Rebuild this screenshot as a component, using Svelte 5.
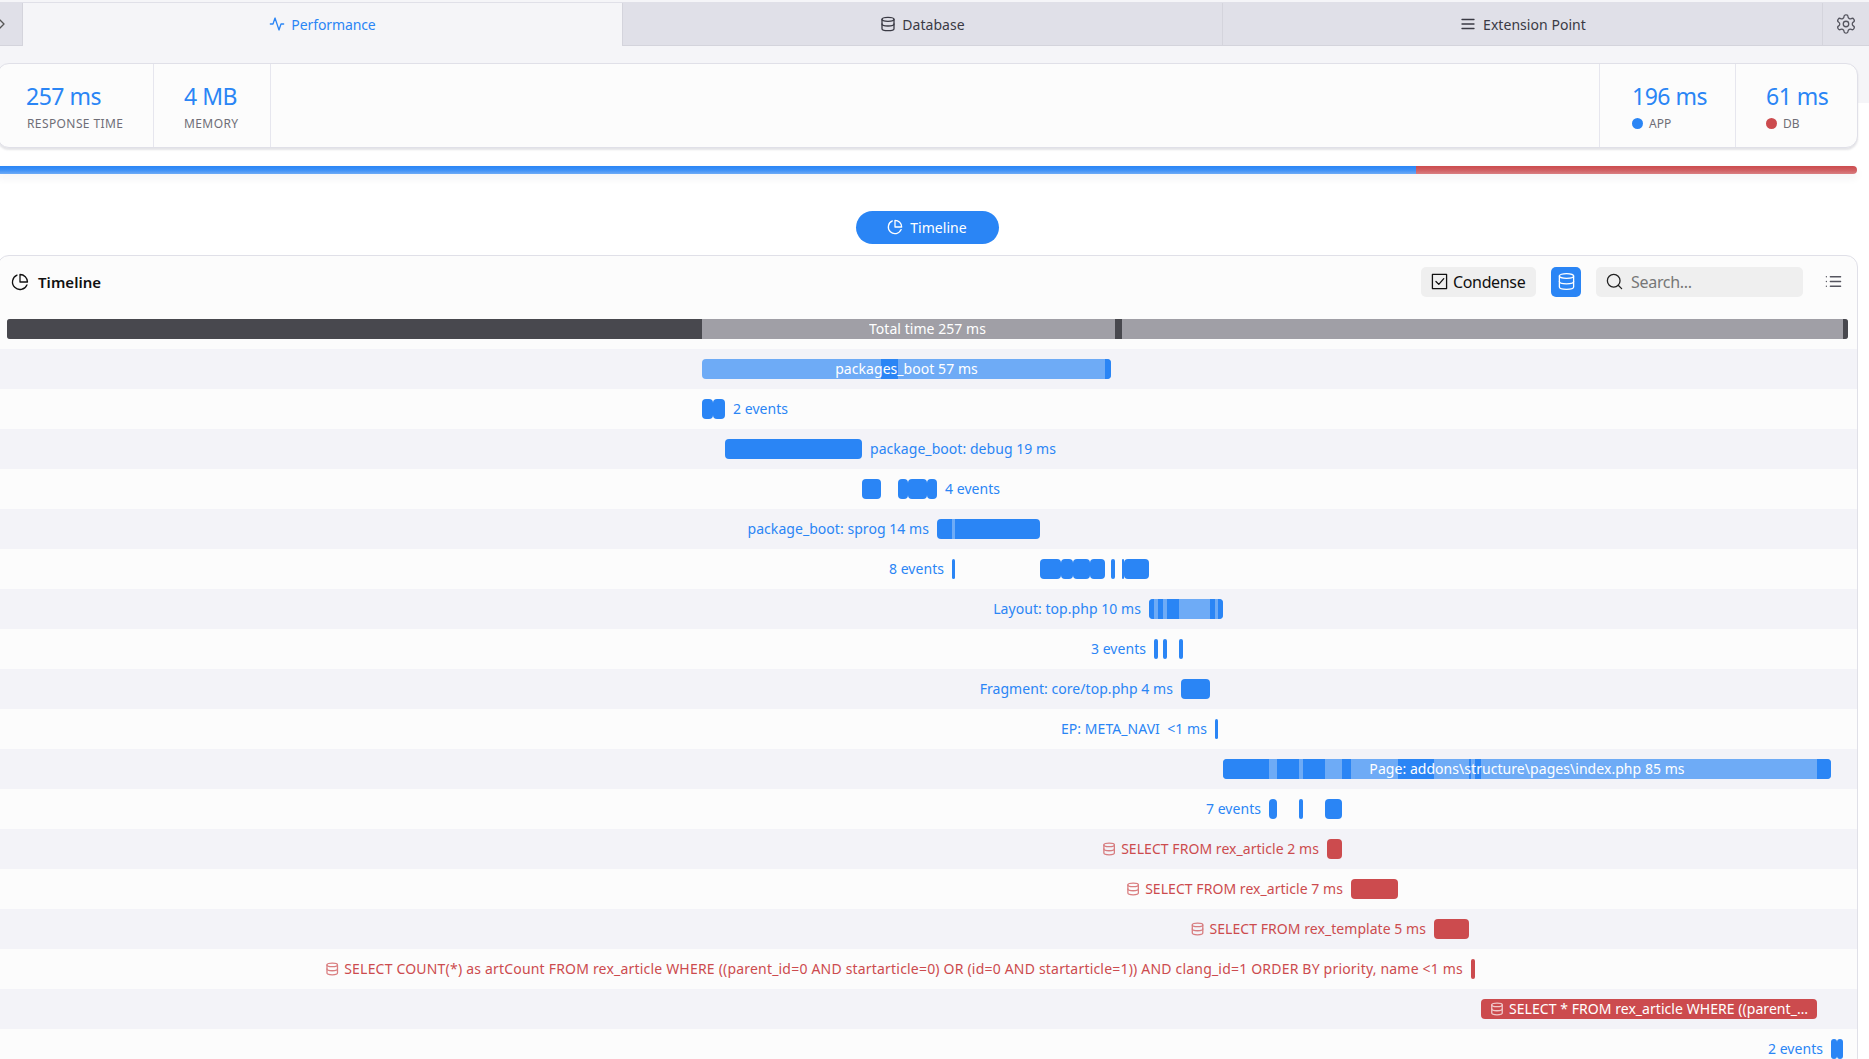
<script lang="ts">
	type Part = [number, number];
	type Bar = { from: number; to: number; tone: string; parts?: Part[]; text?: string; icon?: boolean };
	type Row = {
		bars: Bar[];
		label?: string;
		side?: 'left' | 'right';
		tone?: string;
		icon?: boolean;
	};

	const ev = (tone: string, ...spans: Part[]): Bar[] => spans.map(([from, to]) => ({ from, to, tone }));

	const rows: Row[] = [
		{
			bars: [{ from: 7, to: 1848, tone: 'grey', text: 'Total time 257 ms', parts: [[7, 702], [1115, 1122], [1843, 1848]] }]
		},
		{
			bars: [{ from: 702, to: 1111, tone: 'light', text: 'packages_boot 57 ms', parts: [[881, 898], [1105, 1111]] }]
		},
		{ bars: ev('blue', [702, 713], [713, 725]), label: '2 events', side: 'right' },
		{ bars: ev('blue', [725, 862]), label: 'package_boot: debug 19 ms', side: 'right' },
		{ bars: ev('blue', [862, 881], [898, 908], [908, 927], [927, 937]), label: '4 events', side: 'right' },
		{
			bars: [{ from: 937, to: 1040, tone: 'blue', parts: [] }, { from: 952, to: 955, tone: 'cut' }],
			label: 'package_boot: sprog 14 ms',
			side: 'left'
		},
		{
			bars: ev('blue', [952, 955], [1040, 1061], [1061, 1073], [1073, 1090], [1090, 1105], [1111, 1115], [1122, 1124], [1124, 1149]),
			label: '8 events',
			side: 'left'
		},
		{
			bars: [{ from: 1149, to: 1223, tone: 'light', parts: [[1149, 1154], [1158, 1163], [1167, 1179], [1210, 1215], [1218, 1223]] }],
			label: 'Layout: top.php 10 ms',
			side: 'left'
		},
		{ bars: ev('blue', [1154, 1158], [1163, 1167], [1179, 1183]), label: '3 events', side: 'left' },
		{ bars: ev('blue', [1181, 1210]), label: 'Fragment: core/top.php 4 ms', side: 'left' },
		{ bars: ev('blue', [1215, 1218]), label: 'EP: META_NAVI\u00a0 <1 ms', side: 'left' },
		{
			bars: [
				{
					from: 1223,
					to: 1831,
					tone: 'light',
					text: 'Page: addons\\structure\\pages\\index.php 85 ms',
					parts: [[1223, 1269], [1277, 1299], [1303, 1325], [1342, 1351], [1398, 1434], [1469, 1471], [1475, 1481], [1817, 1831]]
				}
			]
		},
		{ bars: ev('blue', [1269, 1277], [1299, 1303], [1325, 1342]), label: '7 events', side: 'left' },
		{ bars: ev('red', [1327, 1342]), label: 'SELECT FROM rex_article 2 ms', side: 'left', tone: 'red', icon: true },
		{ bars: ev('red', [1351, 1398]), label: 'SELECT FROM rex_article 7 ms', side: 'left', tone: 'red', icon: true },
		{ bars: ev('red', [1434, 1469]), label: 'SELECT FROM rex_template 5 ms', side: 'left', tone: 'red', icon: true },
		{
			bars: ev('red', [1471, 1475]),
			label: 'SELECT COUNT(*) as artCount FROM rex_article WHERE ((parent_id=0 AND startarticle=0) OR (id=0 AND startarticle=1)) AND clang_id=1 ORDER BY priority, name <1 ms',
			side: 'left',
			tone: 'red long',
			icon: true
		},
		{
			bars: [{ from: 1481, to: 1817, tone: 'red', text: 'SELECT * FROM rex_article WHERE ((parent_id=0 AND startarticle=0) OR (id=0 AND startarticle=1))', icon: true }]
		},
		{ bars: ev('blue', [1831, 1837], [1837, 1843]), label: '2 events', side: 'left' }
	];

	// card sits 2px left of the viewport once its border is counted
	const OFFSET = 2;
	const GAP = 8;

	function labelPos(row: Row) {
		const x = row.side === 'right' ? row.bars[row.bars.length - 1].to + GAP : row.bars[0].from - GAP;
		return `left:${x + OFFSET}px`;
	}
</script>

{#snippet icon(name: string, size = 16)}
	<svg class="icon" width={size} height={size} viewBox="0 0 24 24" fill="none" stroke="currentColor" stroke-width={31 / size} stroke-linecap="round" stroke-linejoin="round">
		{#if name === 'activity'}
			<path d="M22 12h-4l-3 9L9 3l-3 9H2" />
		{:else if name === 'database'}
			<ellipse cx="12" cy="5" rx="9" ry="3" />
			<path d="M3 5v14a9 3 0 0 0 18 0V5" />
			<path d="M3 12a9 3 0 0 0 18 0" />
		{:else if name === 'menu'}
			<path d="M4 6h16M4 12h16M4 18h16" />
		{:else if name === 'settings'}
			<path d="M12.22 2h-.44a2 2 0 0 0-2 2v.18a2 2 0 0 1-1 1.73l-.43.25a2 2 0 0 1-2 0l-.15-.08a2 2 0 0 0-2.73.73l-.22.38a2 2 0 0 0 .73 2.73l.15.1a2 2 0 0 1 1 1.72v.51a2 2 0 0 1-1 1.74l-.15.09a2 2 0 0 0-.73 2.73l.22.38a2 2 0 0 0 2.73.73l.15-.08a2 2 0 0 1 2 0l.43.25a2 2 0 0 1 1 1.73V20a2 2 0 0 0 2 2h.44a2 2 0 0 0 2-2v-.18a2 2 0 0 1 1-1.73l.43-.25a2 2 0 0 1 2 0l.15.08a2 2 0 0 0 2.73-.73l.22-.39a2 2 0 0 0-.73-2.73l-.15-.08a2 2 0 0 1-1-1.74v-.5a2 2 0 0 1 1-1.74l.15-.09a2 2 0 0 0 .73-2.73l-.22-.38a2 2 0 0 0-2.73-.73l-.15.08a2 2 0 0 1-2 0l-.43-.25a2 2 0 0 1-1-1.73V4a2 2 0 0 0-2-2z" />
			<circle cx="12" cy="12" r="3" />
		{:else if name === 'pie'}
			<path d="M21.21 15.89A10 10 0 1 1 8 2.83" />
			<path d="M22 12A10 10 0 0 0 12 2v10z" />
		{:else if name === 'search'}
			<circle cx="11" cy="11" r="8" />
			<path d="m21 21-4.3-4.3" />
		{:else if name === 'check'}
			<rect x="2" y="2" width="20" height="20" />
			<path d="m7 12 4 4 7-8" />
		{:else if name === 'list'}
			<path d="M8 6h13M8 12h13M8 18h13M3 6h.01M3 12h.01M3 18h.01" />
		{:else if name === 'chevron'}
			<path d="m9 18 6-6-6-6" />
		{/if}
	</svg>
{/snippet}

<div class="page">
	<nav class="tabs">
		<div class="toggle">{@render icon('chevron', 16)}</div>
		<div class="tab active">{@render icon('activity', 16)}Performance</div>
		<div class="tab">{@render icon('database', 16)}Database</div>
		<div class="tab">{@render icon('menu', 18)}Extension Point</div>
		<div class="gear">{@render icon('settings', 22)}</div>
	</nav>

	<section class="stats">
		<div class="stat first">
			<div class="value">257 ms</div>
			<div class="caption">Response time</div>
		</div>
		<div class="stat second">
			<div class="value">4 MB</div>
			<div class="caption">Memory</div>
		</div>
		<div class="spacer"></div>
		<div class="stat third">
			<div class="value">196 ms</div>
			<div class="caption"><i class="dot app"></i>App</div>
		</div>
		<div class="stat fourth">
			<div class="value">61 ms</div>
			<div class="caption"><i class="dot db"></i>DB</div>
		</div>
	</section>

	<div class="progress">
		<div class="app-part"></div>
		<div class="db-part"></div>
	</div>

	<div class="switch">
		<button class="pill">{@render icon('pie', 16)}<span>Timeline</span></button>
	</div>

	<section class="card">
		<header>
			<div class="title">{@render icon('pie', 18)}Timeline</div>
			<div class="controls">
				<div class="condense">{@render icon('check', 17)}Condense</div>
				<div class="db-btn">{@render icon('database', 19)}</div>
				<div class="search">{@render icon('search', 19)}<span>Search...</span></div>
				<div class="listing">{@render icon('list', 19)}</div>
			</div>
		</header>

		<div class="rows">
			{#each rows as row}
				<div class="row">
					{#each row.bars as bar}
						<div class="bar {bar.tone}" style="left:{bar.from + OFFSET}px;width:{bar.to - bar.from}px">
							{#each bar.parts ?? [] as [a, b]}
								<i class="part" style="left:{a - bar.from}px;width:{b - a}px"></i>
							{/each}
							{#if bar.text}
								<span class="inner">
									{#if bar.icon}{@render icon('database', 14)}{/if}
									<span class="clip">{bar.text}</span>
								</span>
							{/if}
						</div>
					{/each}
					{#if row.label}
						<div class="label {row.side} {row.tone ?? ''}" style={labelPos(row)}>
							{#if row.icon}{@render icon('database', 14)}{/if}{row.label}
						</div>
					{/if}
				</div>
			{/each}
		</div>
	</section>
</div>

<style>
	:global(body) {
		margin: 0;
		overflow: hidden;
		background: #fff;
	}
	.page {
		height: 1059px;
		overflow: hidden;
		padding-top: 2px;
		box-sizing: border-box;
		background: linear-gradient(#f5f5f8, #f5f5f8) no-repeat 0 0 / 100% 103px;
		font-family: 'Noto Sans', sans-serif;
		font-size: 14px;
		letter-spacing: 0.05px;
		color: #1a1523;
	}
	.icon { flex: none; }

	.tabs {
		display: flex;
		height: 44px;
		border-top: 1px solid #e0e0e8;
		box-sizing: border-box;
	}
	.toggle {
		width: 22px;
		display: flex;
		align-items: center;
		background: #e0e0e8;
		border-bottom: 1px solid #d4d4dc;
		box-sizing: border-box;
		color: #555;
		overflow: hidden;
	}
	.toggle .icon { margin-left: -6px; }
	.tab {
		flex: 1;
		display: flex;
		align-items: center;
		justify-content: center;
		gap: 6px;
		background: #e0e0e8;
		border-bottom: 1px solid #d4d4dc;
		border-left: 1px solid #d4d4dc;
		color: #3a3a44;
		box-sizing: border-box;
	}
	.tab.active {
		padding-bottom: 1px;
		background: #f5f5f8;
		color: #2a85f5;
		border-bottom: none;
		border-right: 1px solid #d4d4dc;
		letter-spacing: -0.1px;
	}
	.tab.active + .tab { border-left: none; }
	.gear {
		width: 47px;
		display: flex;
		align-items: center;
		justify-content: center;
		background: #e0e0e8;
		border-bottom: 1px solid #d4d4dc;
		border-left: 1px solid #d4d4dc;
		box-sizing: border-box;
		color: #55555f;
	}

	.stats {
		display: flex;
		height: 85px;
		margin: 17px 11px 0 -3px;
		background: #fcfcfc;
		border: 1px solid #e0e0e8;
		border-radius: 12px;
		box-sizing: border-box;
		box-shadow: 0 2px 2px rgba(30, 30, 60, 0.12);
	}
	.stat {
		padding-top: 16px;
		box-sizing: border-box;
		border-right: 1px solid #e6e6ee;
	}
	.first { width: 156px; padding-left: 28px; }
	.second { width: 117px; padding-left: 30px; }
	.third { width: 136px; padding-left: 32px; border-left: 1px solid #e6e6ee; border-right: none; }
	.fourth { width: 122px; padding-left: 30px; border-left: 1px solid #e6e6ee; border-right: none; }
	.spacer { flex: 1; }
	.value {
		font-size: 23px;
		line-height: 32px;
		color: #2a85f5;
		letter-spacing: -0.5px;
	}
	.caption {
		margin-top: 4px;
		font-size: 12px;
		line-height: 16px;
		color: #6f6e77;
		text-transform: uppercase;
		letter-spacing: 0.4px;
	}
	.first .caption { margin-left: 1px; }
	.third .caption, .fourth .caption { letter-spacing: 0; }
	.dot {
		display: inline-block;
		width: 11px;
		height: 11px;
		border-radius: 50%;
		margin-right: 6px;
		vertical-align: -1px;
	}
	.dot.app { background: #2a85f5; }
	.dot.db { background: #cc4b4e; }

	.progress {
		display: flex;
		height: 8px;
		margin: 18px 12px 0 -3px;
		border-radius: 0 4px 4px 0;
		overflow: hidden;
		box-shadow: 0 4px 8px rgba(30, 30, 60, 0.06);
	}
	.app-part { width: 1419px; background: linear-gradient(#2a85f5, #3c90f7 50%, #6eabf6); }
	.db-part { flex: 1; background: linear-gradient(#cc4b4e, #d05e61 50%, #d97f82); }

	.switch {
		display: flex;
		justify-content: center;
		margin: 37px 0 11px;
		padding-right: 15px;
	}
	.pill {
		display: flex;
		align-items: center;
		justify-content: center;
		gap: 7px;
		width: 143px;
		height: 33px;
		padding: 0 0 1px;
		border: none;
		border-radius: 17px;
		background: #2a85f5;
		color: #fff;
		font: inherit;
		letter-spacing: inherit;
	}

	.card {
		margin: 0 11px 0 -3px;
		background: #fcfcfc;
		border: 1px solid #e0e0e8;
		border-radius: 12px;
	}
	header {
		display: flex;
		align-items: center;
		justify-content: space-between;
		height: 53px;
		padding: 0 14px 0 13px;
		box-sizing: border-box;
	}
	.title {
		display: flex;
		align-items: center;
		gap: 9px;
		margin-top: -2px;
		font-size: 15px;
		font-weight: 600;
		color: #111;
	}
	.controls {
		display: flex;
		align-items: center;
		margin-top: -2px;
	}
	.condense, .db-btn, .search {
		display: flex;
		align-items: center;
		height: 30px;
		border-radius: 5px;
		box-sizing: border-box;
	}
	.condense {
		width: 115px;
		padding-left: 10px;
		gap: 5px;
		background: #efefef;
		color: #111;
		font-size: 16px;
		letter-spacing: -0.35px;
	}
	.db-btn {
		width: 30px;
		margin-left: 15px;
		justify-content: center;
		background: #2a85f5;
		color: #fff;
	}
	.search {
		width: 207px;
		margin-left: 15px;
		padding-left: 9px;
		gap: 7px;
		background: #efefef;
		color: #222;
	}
	.search span { color: #777; font-size: 16px; letter-spacing: -0.3px; }
	.listing {
		display: flex;
		margin-left: 21px;
		color: #55555f;
	}

	.row {
		position: relative;
		height: 40px;
		background: #fcfcfc;
	}
	.row:nth-child(even) { background: #f3f3f8; }
	.bar {
		position: absolute;
		top: 10px;
		height: 20px;
		border-radius: 4px;
		overflow: hidden;
		color: #fff;
	}
	.bar.blue { background: #2a85f5; }
	.bar.light { background: #6eabf6; }
	.bar.red { background: #cc4b4e; }
	.bar.grey { background: #a09fa6; border-radius: 3px; }
	.bar.grey .part { background: #48484e; }
	.bar.cut { background: #6eabf6; border-radius: 0; }
	.part {
		position: absolute;
		top: 0;
		bottom: 0;
		background: #2a85f5;
	}
	.inner {
		position: absolute;
		inset: 0 0 1px;
		display: flex;
		align-items: center;
		justify-content: center;
		gap: 5px;
		padding: 0 9px;
		white-space: nowrap;
	}
	.clip {
		overflow: hidden;
		text-overflow: ellipsis;
	}
	.label {
		position: absolute;
		top: 0;
		display: flex;
		align-items: center;
		gap: 5px;
		height: 39px;
		color: #2a85f5;
		white-space: nowrap;
	}
	.label.left { transform: translateX(-100%); }
	.label.red { color: #cc4b4e; }
	.label.long { letter-spacing: 0.195px; }
	.label .icon, .inner .icon { opacity: 0.7; }
</style>
